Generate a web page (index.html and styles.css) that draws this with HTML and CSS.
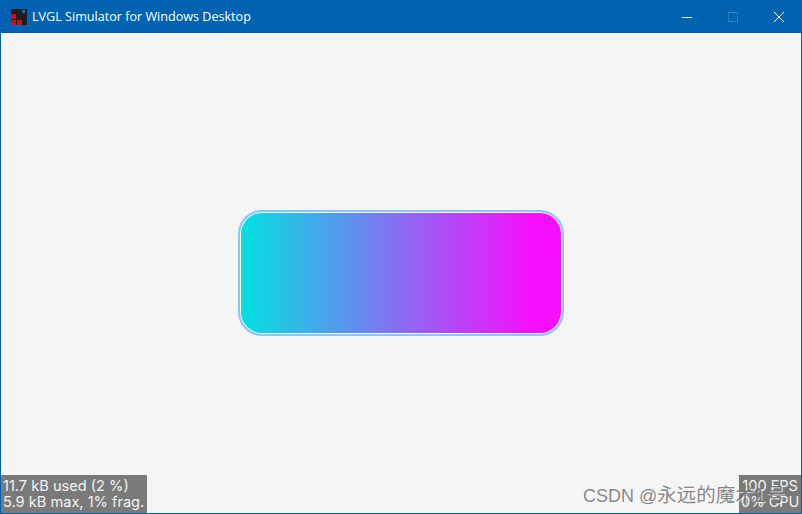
FILE: index.html
```html
<!DOCTYPE html>
<html lang="zh">
<head>
<meta charset="utf-8">
<title>LVGL Simulator for Windows Desktop</title>
<link rel="stylesheet" href="styles.css">
</head>
<body>
<div class="window">
  <header class="titlebar">
    <svg class="app-icon" width="16" height="16" viewBox="0 0 16 16">
      <rect width="16" height="16" fill="#1d1d1f"/>
      <rect x="11" y="1" width="3" height="3" fill="#0f6cae"/>
      <rect y="5" width="5" height="5" fill="#e0040f"/>
      <rect y="11" width="5" height="5" fill="#e0040f"/>
      <rect x="6" y="11" width="5" height="5" fill="#e0040f"/>
    </svg>
    <span class="title">LVGL Simulator for Windows Desktop</span>
    <div class="controls">
      <span class="control">
        <svg width="10" height="10" viewBox="0 0 10 10"><path d="M0 5.5H10" stroke="#fff" fill="none"/></svg>
      </span>
      <span class="control">
        <svg width="10" height="10" viewBox="0 0 10 10"><rect x=".5" y=".5" width="9" height="9" stroke="#2f7fc1" fill="none"/></svg>
      </span>
      <span class="control">
        <svg width="10" height="10" viewBox="0 0 10 10"><path d="M0 0L10 10M10 0L0 10" stroke="#fff" fill="none"/></svg>
      </span>
    </div>
  </header>
  <main class="screen">
    <div class="gradient-button"></div>
    <div class="stat stat-left">11.7 kB used (2 %)<br>5.9 kB max, 1% frag.</div>
    <div class="stat stat-right">100 FPS<br>0% CPU</div>
    <div class="watermark">CSDN @<span class="watermark-cjk">永远的魔术1号</span></div>
  </main>
</div>
</body>
</html>
```
FILE: styles.css
```css
* { box-sizing: border-box; }
html, body { margin: 0; height: 100%; overflow: hidden; }
.window {
  width: 802px;
  height: 514px;
  border: 1px solid #0063b1;
  border-top: 0;
  display: flex;
  flex-direction: column;
  background: #f5f5f5;
}
.titlebar {
  height: 33px;
  flex: none;
  margin: 0 -1px;
  background: #0063b1;
  display: flex;
  align-items: center;
  padding-left: 11px;
  color: #fff;
  font: 12.6px "Open Sans", "Noto Sans", sans-serif;
}
.app-icon { flex: none; }
.title { margin-left: 5px; }
.controls { margin-left: auto; display: flex; }
.control {
  width: 46px;
  height: 32px;
  display: flex;
  align-items: center;
  justify-content: center;
}
.screen {
  flex: 1;
  position: relative;
  display: flex;
  align-items: center;
  justify-content: center;
}
.gradient-button {
  width: 326px;
  height: 126px;
  border-radius: 24px;
  border: 2px solid #8cc6f4;
  box-shadow: inset 0 0 0 1px #f4fafd;
  background: linear-gradient(to right, #0adae2 3%, #f60fff 90%) padding-box;
}
.stat {
  position: absolute;
  bottom: 0;
  height: 38px;
  background: #7a7a7a;
  color: #f4f4f4;
  font: 400 14.6px/16px Inter, "Open Sans", sans-serif;
  padding: 3px 3px 0 2px;
  white-space: nowrap;
}
.stat-left { left: 0; width: 146px; }
.stat-right { right: 0; width: 62px; text-align: right; }
.watermark {
  position: absolute;
  left: 582px;
  bottom: 6px;
  font: 18px/22px "Liberation Sans", "Noto Sans CJK SC", sans-serif;
  color: rgba(105, 105, 105, .8);
  text-shadow: 1px 1px 1px rgba(255, 255, 255, .75);
  white-space: nowrap;
}
.watermark-cjk { font-size: 19.5px; }
```
